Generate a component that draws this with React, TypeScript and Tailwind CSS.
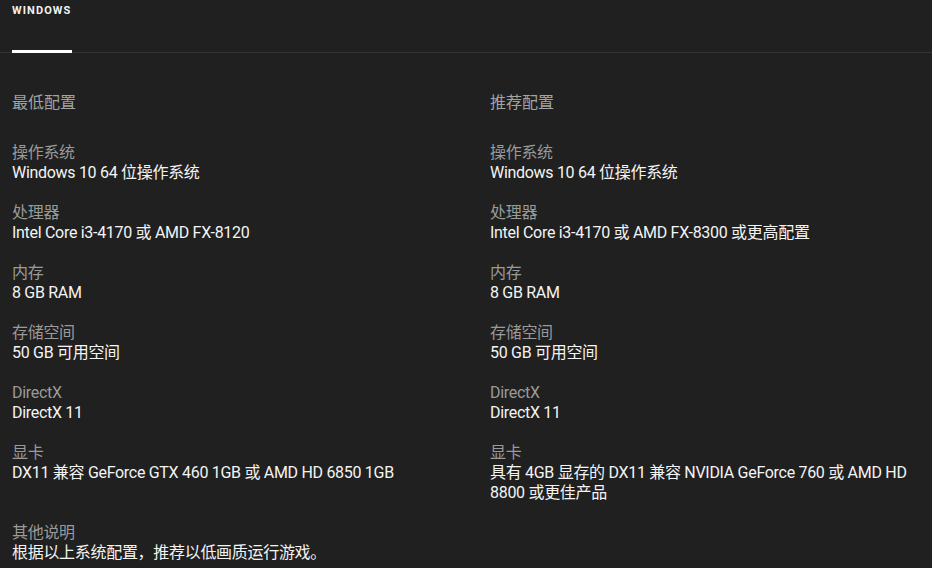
import React from "react";

const font = { fontFamily: 'Roboto, "Noto Sans CJK SC", sans-serif' };

type Item = { label: string; value: string };

const minimum: Item[] = [
  { label: "操作系统", value: "Windows 10 64 位操作系统" },
  { label: "处理器", value: "Intel Core i3-4170 或 AMD FX-8120" },
  { label: "内存", value: "8 GB RAM" },
  { label: "存储空间", value: "50 GB 可用空间" },
  { label: "DirectX", value: "DirectX 11" },
  { label: "显卡", value: "DX11 兼容 GeForce GTX 460 1GB 或 AMD HD 6850 1GB" },
];

const recommended: Item[] = [
  { label: "操作系统", value: "Windows 10 64 位操作系统" },
  { label: "处理器", value: "Intel Core i3-4170 或 AMD FX-8300 或更高配置" },
  { label: "内存", value: "8 GB RAM" },
  { label: "存储空间", value: "50 GB 可用空间" },
  { label: "DirectX", value: "DirectX 11" },
  { label: "显卡", value: "具有 4GB 显存的 DX11 兼容 NVIDIA GeForce 760 或 AMD HD 8800 或更佳产品" },
];

function Column({ title, items }: { title: string; items: Item[] }) {
  return (
    <div className="flex flex-col">
      <div className="text-[16px] leading-6 text-[#a3a3a3] mb-[28px]">{title}</div>
      {items.map((it) => (
        <div key={it.label} className="mb-5">
          <div className="text-[16px] leading-5 text-[#9a9a9a] tracking-[-0.3px]">{it.label}</div>
          <div className="text-[16px] leading-5 text-[#f4f4f4] tracking-[-0.3px]">{it.value}</div>
        </div>
      ))}
    </div>
  );
}

export default function App() {
  return (
    <div className="w-full h-[568px] overflow-hidden bg-[#202020]" style={font}>
      <div className="flex border-b border-[#333333] pl-3">
        <div className="h-[53px] -mb-px w-[60px] border-b-[3px] border-white pt-[3px] text-[11px] leading-4 font-bold tracking-[0.1em] text-[#f2f2f2]">
          WINDOWS
        </div>
      </div>
      <div className="px-3">
        <div className="grid grid-cols-2 gap-x-12 mt-[38px]">
          <Column title="最低配置" items={minimum} />
          <Column title="推荐配置" items={recommended} />
        </div>
        <div>
          <div className="text-[16px] leading-5 text-[#9a9a9a] tracking-[-0.3px]">其他说明</div>
          <div className="text-[16px] leading-5 text-[#f4f4f4] tracking-[-0.3px]">根据以上系统配置，推荐以低画质运行游戏。</div>
        </div>
      </div>
    </div>
  );
}
